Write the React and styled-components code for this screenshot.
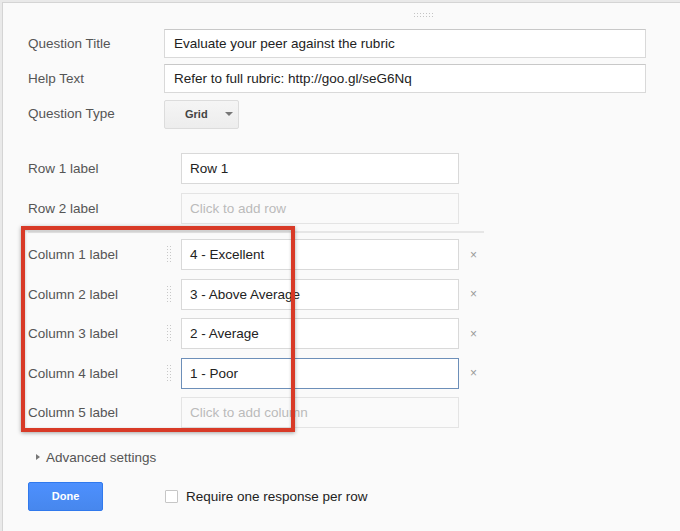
import styled, { createGlobalStyle } from "styled-components";

const GlobalStyle = createGlobalStyle`
  html, body {
    margin: 0;
    padding: 0;
    background: #e9e9e9;
    font-family: "Liberation Sans", Arial, sans-serif;
  }
`;

const columns = [
  { label: "Column 1 label", value: "4 - Excellent" },
  { label: "Column 2 label", value: "3 - Above Average" },
  { label: "Column 3 label", value: "2 - Average" },
  { label: "Column 4 label", value: "1 - Poor", focused: true },
];

const App = () => {
  return (
    <>
      <GlobalStyle />
      <Panel>
        <Handle />
        <TopGrid>
          <Label>Question Title</Label>
          <Field>Evaluate your peer against the rubric</Field>
          <Label>Help Text</Label>
          <Field>Refer to full rubric: http://goo.gl/seG6Nq</Field>
          <Label>Question Type</Label>
          <div>
            <TypeButton>
              Grid
              <Caret />
            </TypeButton>
          </div>
        </TopGrid>

        <Options>
          <OptionRow>
            <Label>Row 1 label</Label>
            <span />
            <OptField>Row 1</OptField>
            <span />
          </OptionRow>
          <OptionRow>
            <Label>Row 2 label</Label>
            <span />
            <OptField $empty>Click to add row</OptField>
            <span />
          </OptionRow>
          <Separator />
          <ColumnGroup>
            {columns.map((c) => (
              <OptionRow key={c.label}>
                <Label>{c.label}</Label>
                <Grip />
                <OptField $focused={c.focused}>{c.value}</OptField>
                <Remove>×</Remove>
              </OptionRow>
            ))}
            <OptionRow>
              <Label>Column 5 label</Label>
              <span />
              <OptField $empty>Click to add column</OptField>
              <span />
            </OptionRow>
            <Highlight />
          </ColumnGroup>
        </Options>

        <Advanced>
          <Triangle />
          Advanced settings
        </Advanced>

        <Footer>
          <DoneButton>Done</DoneButton>
          <CheckLabel>
            <Box />
            Require one response per row
          </CheckLabel>
        </Footer>
      </Panel>
    </>
  );
};

const Panel = styled.div`
  position: relative;
  box-sizing: border-box;
  margin: 2px 0 0 2px;
  height: 529px;
  background: #fafafa;
  border-top: 1px solid #d4d4d4;
  border-left: 1px solid #d4d4d4;
  padding: 26px 0 0 25px;
`;

const Handle = styled.div`
  position: absolute;
  left: 410px;
  top: 9px;
  width: 20px;
  height: 6px;
  background-image: radial-gradient(circle, #c4c4c4 0.8px, transparent 1px);
  background-size: 3px 3px;
`;

const TopGrid = styled.div`
  display: grid;
  grid-template-columns: 136px 482px;
  grid-auto-rows: 29px;
  row-gap: 6px;
  align-items: center;
`;

const Label = styled.div`
  font-size: 13.5px;
  color: #555;
  white-space: nowrap;
`;

const Field = styled.div`
  box-sizing: border-box;
  height: 29px;
  display: flex;
  align-items: center;
  padding: 0 9px;
  background: #fff;
  border: 1px solid #d9d9d9;
  border-top-color: #c8c8c8;
  font-size: 13.5px;
  color: #222;
`;

const TypeButton = styled.div`
  box-sizing: border-box;
  width: 75px;
  height: 29px;
  margin-top: 1px;
  display: flex;
  align-items: center;
  padding-left: 20px;
  background: linear-gradient(#f5f5f5, #ededed);
  border: 1px solid #dcdcdc;
  border-radius: 2px;
  font-size: 11px;
  font-weight: bold;
  color: #444;
`;

const Caret = styled.span`
  margin-left: 17px;
  width: 0;
  height: 0;
  border-left: 4px solid transparent;
  border-right: 4px solid transparent;
  border-top: 4px solid #777;
`;

const Options = styled.div`
  margin-top: 25px;
  display: flex;
  flex-direction: column;
`;

const OptionRow = styled.div`
  display: grid;
  grid-template-columns: 138px 15px 278px 18px;
  align-items: center;
  height: 31px;
  margin-bottom: 8.5px;
`;

const OptField = styled.div`
  box-sizing: border-box;
  height: 31px;
  display: flex;
  align-items: center;
  padding: 0 8px;
  background: ${(p) => (p.$empty ? "#fafafa" : "#fff")};
  border: 1px solid ${(p) => (p.$focused ? "#6d8fb9" : p.$empty ? "#e4e4e4" : "#d9d9d9")};
  font-size: 13.5px;
  color: ${(p) => (p.$empty ? "#bbb" : "#222")};
`;

const Separator = styled.div`
  width: 456px;
  height: 2px;
  background: #e6e6e6;
  margin: -1px 0 6px 0;
`;

const ColumnGroup = styled.div`
  position: relative;
`;

const Grip = styled.div`
  width: 6px;
  height: 19px;
  background-image: radial-gradient(circle, #c8c8c8 0.8px, transparent 1px);
  background-size: 3px 3px;
`;

const Remove = styled.div`
  font-size: 12px;
  color: #999;
  text-align: right;
`;

const Highlight = styled.div`
  position: absolute;
  left: -7px;
  top: -13px;
  width: 274px;
  height: 206px;
  box-sizing: border-box;
  border: 4px solid #d83a27;
  box-shadow: 0 1px 4px rgba(0, 0, 0, 0.35), inset 0 1px 3px rgba(0, 0, 0, 0.25);
  pointer-events: none;
`;

const Advanced = styled.div`
  display: flex;
  align-items: center;
  margin: 13px 0 0 8px;
  font-size: 13.5px;
  color: #555;
`;

const Triangle = styled.span`
  width: 0;
  height: 0;
  margin-right: 6px;
  border-top: 3.5px solid transparent;
  border-bottom: 3.5px solid transparent;
  border-left: 4px solid #777;
`;

const Footer = styled.div`
  display: flex;
  align-items: center;
  margin-top: 17px;
`;

const DoneButton = styled.div`
  box-sizing: border-box;
  width: 75px;
  height: 29px;
  display: flex;
  align-items: center;
  justify-content: center;
  background: linear-gradient(#4d90fe, #4787ed);
  border: 1px solid #3079ed;
  border-radius: 2px;
  color: #fff;
  font-size: 11px;
  font-weight: bold;
`;

const CheckLabel = styled.label`
  display: flex;
  align-items: center;
  margin-left: 62px;
  font-size: 13.5px;
  color: #222;
`;

const Box = styled.span`
  box-sizing: border-box;
  width: 13px;
  height: 13px;
  margin-right: 8px;
  background: #fff;
  border: 1px solid #c6c6c6;
  border-radius: 1px;
`;

export default App;
